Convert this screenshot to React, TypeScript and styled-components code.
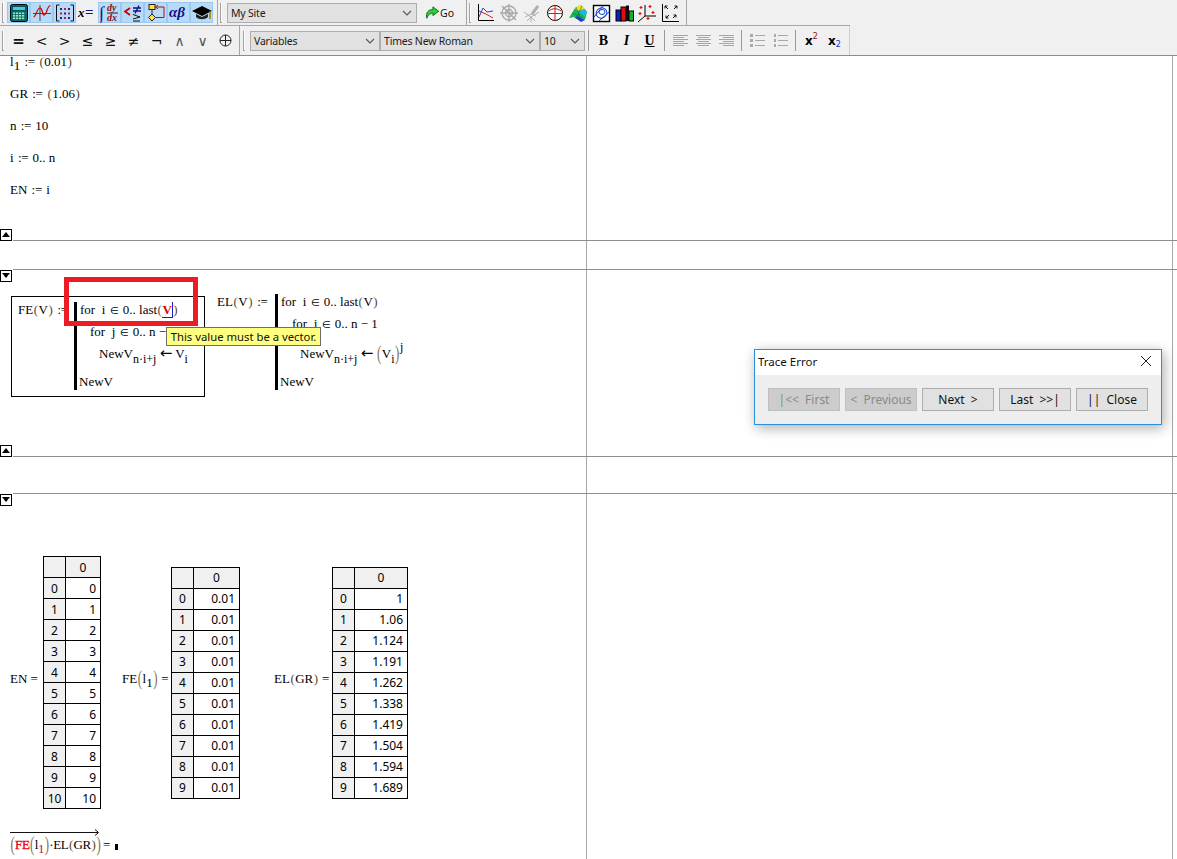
import React from "react";
import styled, { createGlobalStyle } from "styled-components";

const Global = createGlobalStyle`
  html, body { margin: 0; padding: 0; background: #fff; overflow: hidden; }
  * { box-sizing: border-box; }
`;

const uiFont = `"Noto Sans", "DejaVu Sans", sans-serif`;
const mathFont = `"Liberation Serif", serif`;

const Page = styled.div`
  position: relative; width: 1177px; height: 859px; overflow: hidden;
  display: flex; flex-direction: column; background: #fff;
`;
const Chrome = styled.header`
  position: relative; z-index: 2; flex: none; height: 56px; background: #f0f0f0;
  border-bottom: 1px solid #8c8c8c; display: flex; flex-direction: column;
`;
const TopRow = styled.div`display: flex; height: 26px; width: 850px; border-bottom: 1px solid #a6a6a6;`;
const SecondRow = styled.div`display: flex; align-items: center; height: 29px; width: 850px; border-right: 1px solid #d0d0d0;`;
const Bar = styled.div<{ $w: number }>`
  display: flex; align-items: center; width: ${p => p.$w}px; flex: none; height: 100%;
  border-right: 1px solid #a6a6a6;
`;
const Grip = styled.i<{ $ml?: number; $mr?: number }>`
  display: block; width: 2px; height: 20px; flex: none;
  margin: 0 ${p => p.$mr ?? 3}px 0 ${p => p.$ml ?? 2}px;
  border-left: 1px solid #a0a0a0; border-bottom: 1px solid #a0a0a0; background: #fff;
`;
const IconBtn = styled.span<{ $on?: boolean; $w?: number }>`
  display: flex; align-items: center; justify-content: center; flex: none;
  width: ${p => p.$w ?? 23}px; height: 21px;
  background: ${p => (p.$on ? "#b9daf6" : "transparent")};
  border: 1px solid ${p => (p.$on ? "#98c9f3" : "transparent")};
`;
const OpBtn = styled.span<{ $bold?: boolean; $size?: number; $soft?: boolean }>`
  display: flex; align-items: center; justify-content: center; flex: none;
  width: 23px; height: 22px; color: ${p => (p.$soft ? "#555" : "#111")};
  font: ${p => (p.$bold ? 700 : 400)} ${p => p.$size ?? 14}px "DejaVu Sans", sans-serif;
`;
const Select = styled.div<{ $w: number; $ml?: number }>`
  display: flex; align-items: center; justify-content: space-between; flex: none;
  width: ${p => p.$w}px; height: 20px; margin-left: ${p => p.$ml ?? 0}px; padding: 0 4px 0 3px;
  background: #e1e1e1; border: 1px solid #adadad; color: #1a1a1a;
  font: 10.5px ${uiFont}; letter-spacing: -0.2px;
`;
const GoBtn = styled.div`
  display: flex; align-items: center; gap: 0; margin-left: 8px; color: #111;
  font: 10.5px ${uiFont};
`;
const Sep = styled.i<{ $after?: number }>`
  display: block; width: 1px; height: 21px; flex: none; background: #9a9a9a;
  margin: 0 ${p => p.$after ?? 4}px 0 3px;
`;
const FmtBtn = styled.span<{ $italic?: boolean; $under?: boolean }>`
  display: flex; align-items: center; justify-content: center; flex: none; width: 23px; height: 22px;
  color: #000; font: ${p => (p.$italic ? "italic" : "normal")} 700 14px ${mathFont};
  text-decoration: ${p => (p.$under ? "underline" : "none")};
`;
const ScriptBtn = styled.span`
  display: flex; align-items: center; justify-content: center; flex: none; width: 23px; height: 22px;
  font: 700 12px "DejaVu Sans", sans-serif; color: #000;
`;
const Script = styled.span<{ $c: string; $top: number }>`
  position: relative; top: ${p => p.$top}px; font-size: 8px; font-weight: 400; color: ${p => p.$c};
`;

const Worksheet = styled.main`
  flex: 1; overflow: hidden; display: flex; flex-direction: column; color: #000;
  font: 13px/16px ${mathFont};
  background:
    linear-gradient(#a8a8a8, #a8a8a8) 586px 0 / 1px 100% no-repeat,
    linear-gradient(#a8a8a8, #a8a8a8) 1172px 0 / 1px 100% no-repeat,
    #fff;
`;
const Defs = styled.section`
  flex: none; height: 172px; display: flex; flex-direction: column; gap: 16px;
  margin-top: -2px; padding-left: 10px;
`;
const DefsFrame = styled.div`flex: none; height: 172px;`;
const Line = styled.div`height: 16px; white-space: pre;`;
const Sub = styled.span<{ $color?: string }>`
  position: relative; top: 4px; font-size: 13px; color: ${p => p.$color ?? "inherit"};
`;
const SmallSub = styled.span`position: relative; top: 5px; font-size: 12px;`;
const Assign = styled.span`margin: 0 1px; letter-spacing: -0.3px;`;
const Paren = styled.span`color: #5c4a32; margin: 0 0.5px;`;
const Elem = styled.span`font-size: 10px; margin: 0 1px;`;
const Arrow = styled.span`font: 15px/16px "DejaVu Sans", sans-serif;`;
const Rule = styled.div<{ $dir: "up" | "down"; $mt?: number }>`
  flex: none; display: flex; height: 13px; margin-top: ${p => p.$mt ?? 0}px;
  align-items: ${p => (p.$dir === "up" ? "flex-end" : "flex-start")};
  &::after { content: ""; flex: 1; height: 1px; background: #8e8e8e; }
`;
const Marker = styled.span`
  flex: none; display: flex; align-items: center; justify-content: center;
  width: 12px; height: 12px; margin-right: 1px; align-self: center; background: #fff; border: 1px solid #000;
`;
const Programs = styled.section`
  flex: none; height: 162px; padding: 14px 0 0 11px; display: flex; align-items: flex-start;
`;
const FnBox = styled.div`
  width: 194px; height: 101px; border: 1px solid #000; padding: 5px 0 0 6px; display: flex;
`;
const FnPlain = styled.div`margin: -2px 0 0 12px; display: flex;`;
const FnLabel = styled.div<{ $w: number }>`width: ${p => p.$w}px; white-space: pre; flex: none;`;
const Program = styled.div<{ $h: number }>`
  width: 130px; height: ${p => p.$h}px; border-left: 3px solid #000; flex: none; display: flex; flex-direction: column;
`;
const ProgRow = styled.div<{ $indent: number; $gap?: number }>`
  height: 16px; flex: none; white-space: pre;
  margin-top: ${p => p.$gap ?? 0}px; padding-left: ${p => p.$indent}px;
`;
const ErrV = styled.span`
  color: #e00000; font-weight: 700; border-bottom: 1px solid #1a1ad0; border-right: 1px solid #1a1ad0;
`;
const TallParen = styled.span`
  display: inline-block; color: #8a7350; margin: 0 0.5px; transform: scale(1, 1.55);
`;
const Sups = styled.span`position: relative; top: -7px; font-size: 12px;`;
const Results = styled.section`
  flex: none; display: flex; align-items: center; padding: 50px 0 0 10px;
`;
const Group = styled.div<{ $ml?: number }>`display: flex; align-items: center; margin-left: ${p => p.$ml ?? 0}px;`;
const EqLabel = styled.div<{ $w: number }>`
  width: ${p => p.$w}px; flex: none; white-space: pre; margin-bottom: 8px;
`;
const Table = styled.table<{ $w: number }>`
  border-collapse: collapse; table-layout: fixed; width: ${p => p.$w}px; flex: none;
  font: 12px "Noto Sans", sans-serif; color: #000;
`;
const Head = styled.th<{ $w: number }>`
  width: ${p => p.$w}px; height: 21px; padding: 0; font-weight: 400; text-align: center;
  background: #f0f0f0; border: 1px solid #000;
`;
const Val = styled.td`height: 21px; padding: 0 4px 0 0; text-align: right; border: 1px solid #000;`;
const VecWrap = styled.div`
  flex: none; margin: 20px 0 0 10px; display: flex; align-items: flex-end;
`;
const VecBody = styled.div`display: flex; flex-direction: column; width: 90px;`;
const VecLine = styled.div`height: 16px; white-space: pre; margin-top: 1px; letter-spacing: -0.3px;`;
const RedText = styled.span`color: #e8001c; -webkit-text-stroke: 0.3px #e8001c;`;
const Caret = styled.i`
  display: block; width: 3px; height: 6px; background: #000; margin: 0 0 3px 5px;
`;
const Eq = styled.span`margin: 0 0 0 3px; height: 16px;`;

const RedBox = styled.div`
  position: absolute; left: 64px; top: 277px; width: 134px; height: 49px; border: 5px solid #ed1c24; z-index: 3;
`;
const Tooltip = styled.div`
  position: absolute; left: 166px; top: 327px; width: 155px; height: 19px; z-index: 3;
  display: flex; align-items: center; justify-content: center; white-space: nowrap;
  background: #ffff80; border: 1px solid #6e6e6e; color: #111; font: 11.3px ${uiFont};
`;
const Dialog = styled.aside`
  position: absolute; left: 754px; top: 349px; width: 408px; height: 76px; z-index: 4;
  border: 1px solid #2b90d9; background: #eee; box-shadow: 2px 3px 12px rgba(0,0,0,.33);
  display: flex; flex-direction: column;
`;
const TitleBar = styled.div`
  flex: none; height: 25px; background: #fff; display: flex; align-items: center; justify-content: space-between;
  padding: 0 9px 3px 3px; color: #111; font: 11.5px ${uiFont};
`;
const DlgButtons = styled.div`display: flex; gap: 5px; padding: 13px 0 0 13px;`;
const DlgBtn = styled.div<{ $off?: boolean }>`
  width: 72px; height: 23px; display: flex; align-items: center; justify-content: center; white-space: pre;
  font: 12px ${uiFont};
  color: ${p => (p.$off ? "#8a8a8a" : "#111")};
  background: ${p => (p.$off ? "#cccccc" : "#e1e1e1")};
  border: 1px solid ${p => (p.$off ? "#bfbfbf" : "#adadad")};
`;

const S = (p: { children: React.ReactNode }) => (
  <svg width="20" height="20" viewBox="0 0 20 20" style={{ display: "block" }}>{p.children}</svg>
);
const Calc = () => (<S>
  <rect x="1.5" y="1.5" width="17" height="17" rx="2" fill="#0b6a6a" stroke="#000" />
  <rect x="3.5" y="3.5" width="13" height="4" fill="#3fd0e0" stroke="#034" strokeWidth=".7" />
  {[9.5, 12, 14.5].map(y => [4, 7, 10, 13].map(x => <rect key={x + "-" + y} x={x} y={y} width="2.2" height="1.6" fill="#9fe8b8" />))}
</S>);
const Plot = () => (<S>
  <path d="M1 10.5H19M8 2V18" stroke="#222" strokeWidth=".8" />
  <path d="M1.5 14C4 14 5 5 8 5S10 13 12.5 12 15 3 18.5 2.5" fill="none" stroke="#d40000" strokeWidth="1.2" />
</S>);
const MatrixIc = () => (<S>
  <path d="M4.5 2H1.5V18H4.5M15.5 2H18.5V18H15.5" fill="none" stroke="#111" />
  {[5, 9.5, 14].map((y, i) => [5, 9, 13].map((x, j) => <rect key={x + "-" + y} x={x} y={y} width="2" height="2" fill={(i + j) % 2 ? "#c02040" : "#22228c"} />))}
</S>);
const Txt = styled.text<{ $s: number; $b?: boolean; $i?: boolean; $c?: string }>`
  font-family: ${mathFont}; font-size: ${p => p.$s}px; font-weight: ${p => (p.$b ? 700 : 400)};
  font-style: ${p => (p.$i ? "italic" : "normal")}; fill: ${p => p.$c ?? "#000"};
`;
const Deriv = () => (<S>
  <Txt x="-1" y="16" $s={18} $c="#10108c">∫</Txt>
  <Txt x="7" y="8" $s={10} $i $b $c="#8c1010">dy</Txt>
  <path d="M7 10H18" stroke="#222" />
  <Txt x="7" y="18" $s={10} $i $b $c="#8c1010">dx</Txt>
</S>);
const BoolIc = () => (<S>
  <path d="M7 5L2 8.5L7 12" fill="none" stroke="#c00000" strokeWidth="1.7" />
  <path d="M10 5H18M10 8H18M16 2.500L12 10.500" fill="none" stroke="#10108c" strokeWidth="1.3" />
  <path d="M10 11.500L17 14L10 16M10 18H17" fill="none" stroke="#111" />
</S>);
const Flow = () => (<S>
  <rect x="3" y="1.5" width="6" height="5" fill="#ffe040" stroke="#223" />
  <path d="M6 6.5V11" stroke="#223" />
  <path d="M6 11L9.5 14.5L6 18L2.5 14.5Z" fill="#ffe040" stroke="#223" />
  <path d="M9 4H18V14.5H10M12 2L9.5 4L12 6" fill="none" stroke="#b01010" />
</S>);
const Cap = () => (<S>
  <path d="M0 8L10 3L20 8L10 13Z" fill="#000" />
  <path d="M4 11V14C7 17 13 17 16 14V11L10 14Z" fill="#222" />
  <path d="M18 8.5V16" stroke="#b09020" strokeWidth="2" />
</S>);
const GoIc = () => (
  <svg width="15" height="16" viewBox="0 0 17 17" style={{ display: "block" }}>
    <path d="M2 14.5C0.5 8 4 4.5 9 4.5V1.5L15.5 6.5L9 11.5V8.5C6 8.5 3.5 10.5 2 14.5Z" fill="#2fd02f" stroke="#062" strokeWidth="1" />
  </svg>
);
const XY = () => (<S>
  <path d="M2.5 1V17.5H18" fill="none" stroke="#000" />
  <path d="M3 14L7 5L11 9L17 8" fill="none" stroke="#2040e0" />
  <path d="M3 8L10 11L17 15" fill="none" stroke="#e02020" />
</S>);
const PolarGrey = () => (<S>
  <g fill="none" stroke="#a9a9a9" strokeWidth="1.3">
    <circle cx="10" cy="10" r="7" /><circle cx="10" cy="10" r="3.5" />
    <path d="M1 10H19M10 1V19M3 3L17 17" />
  </g>
</S>);
const SurfGrey = () => (<S>
  <g fill="none" stroke="#b0b0b0">
    <path d="M2 9L9 14V19M9 14L17 9M3 14L9 11L14 13M5 18L9 14L13 18" />
    <path d="M10 11L16 3" strokeWidth="3" />
  </g>
</S>);
const PolarC = () => (<S>
  <circle cx="10" cy="10" r="7.5" fill="#fff" stroke="#000" />
  <path d="M2 10.5H18" stroke="#0a8a0a" /><path d="M10 2V18" stroke="#d01010" />
  <path d="M4 8C7 5 12 5 16 8" fill="none" stroke="#d01010" />
</S>);
const Surface = () => (<S>
  <path d="M1 15L7 5L13 2L19 9L17 17L10 13Z" fill="#18b850" />
  <path d="M7 5L13 2L17 6L10 8Z" fill="#f4e020" />
  <path d="M10 8L17 6L19 9L17 13L12 10Z" fill="#20b8e0" />
  <path d="M1 15L10 13L17 17L13 19L6 14Z" fill="#1840d0" />
  <path d="M4 10L15 15M8 4L12 14M14 3L8 16" stroke="#063" strokeWidth=".5" />
</S>);
const Contour = () => (<S>
  <rect x="2.5" y="2.5" width="16" height="16" fill="#fff" stroke="#000" strokeWidth="1.4" />
  <g fill="none" stroke="#1840d0">
    <ellipse cx="11" cy="9" rx="3" ry="2.5" /><ellipse cx="10.5" cy="10" rx="5.5" ry="5" transform="rotate(-30 10.5 10)" />
    <path d="M3 14L12 3M8 18L18 9" />
  </g>
</S>);
const Bars = () => (<S>
  <rect x="2" y="7" width="5" height="11" fill="#1020c0" stroke="#000" />
  <rect x="7" y="4" width="5" height="14" fill="#d81010" stroke="#000" />
  <rect x="12" y="2.5" width="3" height="15.5" fill="#101010" />
  <rect x="15" y="8" width="4.5" height="10" fill="#18b030" stroke="#000" />
</S>);
const Scatter = () => (<S>
  <path d="M8 2V13L1 19M8 13H19" fill="none" stroke="#000" />
  <path d="M4 3V6M2.5 4.5H5.5M13 2V5M11.500 3.500H14.500M16 8V11M14.500 9.500H17.500M3 9V12M1.500 10.500H4.500M11 14V17M9.500 15.500H12.500" stroke="#e01010" strokeWidth="1.2" />
</S>);
const VecField = () => (<S>
  <path d="M2.500 1V18.500H19" fill="none" stroke="#000" />
  <path d="M5 3L8 6M5 3V5.500M5 3H7.500M17 3L14 6M17 3V5.500M17 3H14.500M6 15L9 12M6 15V12.500M6 15H8.500M16 12L13 15M16 12V14.500M16 12H13.500" fill="none" stroke="#111" />
</S>);
const Chevron = () => (
  <svg width="10" height="6" viewBox="0 0 10 6"><path d="M1 1L5 5L9 1" fill="none" stroke="#555" strokeWidth="1.1" /></svg>
);
const AlignIc = ({ kind }: { kind: "l" | "c" | "r" }) => (
  <svg width="15" height="12" viewBox="0 0 15 12" shapeRendering="crispEdges">
    {[0, 2, 4, 6, 8, 10].map((y, i) => {
      const w = i % 2 ? 11 : 15;
      const x = kind === "l" ? 0 : kind === "r" ? 15 - w : 2 * (i % 2);
      return <rect key={y} x={x} y={y} width={w} height="1" fill="#a4a4a4" />;
    })}
  </svg>
);
const ListIc = ({ num }: { num?: boolean }) => (
  <svg width="15" height="14" viewBox="0 0 15 14" shapeRendering="crispEdges">
    {[1, 6, 11].map(y => (
      <g key={y}>
        <rect x={num ? 1 : 0} y={y - 1} width={num ? 2 : 3} height={3} fill="#a8a8a8" />
        <rect x="5" y={y} width="10" height="1" fill="#a8a8a8" />
      </g>
    ))}
  </svg>
);
const CrossCircle = () => (
  <svg width="13" height="13" viewBox="0 0 13 13"><g fill="none" stroke="#222"><circle cx="6.500" cy="6.500" r="5.500" /><path d="M1 6.500H12M6.500 1V12" /></g></svg>
);
const Tri = ({ up }: { up: boolean }) => (
  <svg width="8" height="5" viewBox="0 0 8 5"><path d={up ? "M0 5L4 0L8 5Z" : "M0 0L4 5L8 0Z"} fill="#000" /></svg>
);
const VecArrow = () => (
  <svg width="90" height="7" viewBox="0 0 90 7" style={{ display: "block" }}>
    <path d="M0 3.500H88M85 0.500L88.500 3.500L85 6.500" fill="none" stroke="#111" />
  </svg>
);
const CloseX = () => (
  <svg width="12" height="12" viewBox="0 0 12 12"><path d="M1 1L11 11M11 1L1 11" stroke="#222" /></svg>
);

const ResultTable = ({ w, rows }: { w: number; rows: string[] }) => (
  <Table $w={22 + w}>
    <thead><tr><Head $w={22} /><Head $w={w}>0</Head></tr></thead>
    <tbody>
      {rows.map((v, i) => (
        <tr key={i}><Head as="td" $w={22}>{i}</Head><Val>{v}</Val></tr>
      ))}
    </tbody>
  </Table>
);

const Up = () => <Rule $dir="up"><Marker><Tri up /></Marker></Rule>;
const Down = ({ mt }: { mt: number }) => <Rule $dir="down" $mt={mt}><Marker><Tri up={false} /></Marker></Rule>;

export default function App() {
  return (
    <Page>
      <Global />
      <Chrome>
        <TopRow>
          <Bar $w={218}>
            <Grip />
            <IconBtn $on><Calc /></IconBtn>
            <IconBtn $on><Plot /></IconBtn>
            <IconBtn $on><MatrixIc /></IconBtn>
            <IconBtn $w={22}><S><Txt x="1" y="14" $s={13} $b $i>x</Txt><Txt x="8" y="14" $s={15} $b $c="#10108c">=</Txt></S></IconBtn>
            <IconBtn $on><Deriv /></IconBtn>
            <IconBtn $on><BoolIc /></IconBtn>
            <IconBtn $on><Flow /></IconBtn>
            <IconBtn $on><S><Txt x="0" y="14" $s={15} $b $i $c="#10108c">αβ</Txt></S></IconBtn>
            <IconBtn $on><Cap /></IconBtn>
          </Bar>
          <Bar $w={249}>
            <Grip />
            <Select $w={190} $ml={2}>My Site<Chevron /></Select>
            <GoBtn><GoIc />Go</GoBtn>
          </Bar>
          <Bar $w={220}>
            <Grip />
            <IconBtn><XY /></IconBtn>
            <IconBtn><PolarGrey /></IconBtn>
            <IconBtn><SurfGrey /></IconBtn>
            <IconBtn><PolarC /></IconBtn>
            <IconBtn><Surface /></IconBtn>
            <IconBtn><Contour /></IconBtn>
            <IconBtn><Bars /></IconBtn>
            <IconBtn><Scatter /></IconBtn>
            <IconBtn><VecField /></IconBtn>
          </Bar>
        </TopRow>
        <SecondRow>
          <Bar $w={240}>
            <Grip />
            <OpBtn $bold $size={15}>=</OpBtn>
            <OpBtn>&lt;</OpBtn>
            <OpBtn>&gt;</OpBtn>
            <OpBtn>≤</OpBtn>
            <OpBtn>≥</OpBtn>
            <OpBtn>≠</OpBtn>
            <OpBtn>¬</OpBtn>
            <OpBtn $size={14} $soft>∧</OpBtn>
            <OpBtn $size={14} $soft>∨</OpBtn>
            <OpBtn><CrossCircle /></OpBtn>
          </Bar>
          <Grip $ml={3} $mr={5} />
          <Select $w={130}>Variables<Chevron /></Select>
          <Select $w={160}>Times New Roman<Chevron /></Select>
          <Select $w={45}>10<Chevron /></Select>
          <Sep $after={3} />
          <FmtBtn>B</FmtBtn>
          <FmtBtn $italic>I</FmtBtn>
          <FmtBtn $under>U</FmtBtn>
          <Sep />
          <IconBtn><AlignIc kind="l" /></IconBtn>
          <IconBtn><AlignIc kind="c" /></IconBtn>
          <IconBtn><AlignIc kind="r" /></IconBtn>
          <Sep />
          <IconBtn><ListIc /></IconBtn>
          <IconBtn><ListIc num /></IconBtn>
          <Sep />
          <ScriptBtn>x<Script $c="#a01010" $top={-4}>2</Script></ScriptBtn>
          <ScriptBtn>x<Script $c="#1030d0" $top={4}>2</Script></ScriptBtn>
        </SecondRow>
      </Chrome>
      <Worksheet>
        <DefsFrame>
          <Defs>
            <Line>l<Sub>1</Sub> <Assign>:=</Assign> <Paren>(</Paren>0.01<Paren>)</Paren></Line>
            <Line>GR <Assign>:=</Assign> <Paren>(</Paren>1.06<Paren>)</Paren></Line>
            <Line>n <Assign>:=</Assign> 10</Line>
            <Line>i <Assign>:=</Assign> 0.. n</Line>
            <Line>EN <Assign>:=</Assign> i</Line>
          </Defs>
        </DefsFrame>
        <Up />
        <Down mt={28} />
        <Programs>
          <FnBox>
            <FnLabel $w={56}>FE<Paren>(</Paren>V<Paren>)</Paren> <Assign>:=</Assign></FnLabel>
            <Program $h={88}>
              <ProgRow $indent={3}>for  i <Elem>∈</Elem> 0.. last<Paren>(</Paren><ErrV>V</ErrV><Paren>)</Paren></ProgRow>
              <ProgRow $indent={13} $gap={6}>for  j <Elem>∈</Elem> 0.. n − 1</ProgRow>
              <ProgRow $indent={22} $gap={5}>NewV<SmallSub>n·i+j</SmallSub> <Arrow>←</Arrow> V<SmallSub>i</SmallSub></ProgRow>
              <ProgRow $indent={2} $gap={13}>NewV</ProgRow>
            </Program>
          </FnBox>
          <FnPlain>
            <FnLabel $w={58}>EL<Paren>(</Paren>V<Paren>)</Paren> <Assign>:=</Assign></FnLabel>
            <Program $h={96}>
              <ProgRow $indent={3}>for  i <Elem>∈</Elem> 0.. last<Paren>(</Paren>V<Paren>)</Paren></ProgRow>
              <ProgRow $indent={14} $gap={6}>for  j <Elem>∈</Elem> 0.. n − 1</ProgRow>
              <ProgRow $indent={22} $gap={13}>NewV<SmallSub>n·i+j</SmallSub> <Arrow>←</Arrow> <TallParen>(</TallParen>V<SmallSub>i</SmallSub><TallParen>)</TallParen><Sups>j</Sups></ProgRow>
              <ProgRow $indent={2} $gap={13}>NewV</ProgRow>
            </Program>
          </FnPlain>
        </Programs>
        <Up />
        <Down mt={36} />
        <Results>
          <Group>
            <EqLabel $w={33}>EN =</EqLabel>
            <ResultTable w={35} rows={["0", "1", "2", "3", "4", "5", "6", "7", "8", "9", "10"]} />
          </Group>
          <Group $ml={21}>
            <EqLabel $w={49}>FE<TallParen>(</TallParen>l<Sub>1</Sub><TallParen>)</TallParen> =</EqLabel>
            <ResultTable w={46} rows={Array(10).fill("0.01")} />
          </Group>
          <Group $ml={34}>
            <EqLabel $w={58}>EL<Paren>(</Paren>GR<Paren>)</Paren> =</EqLabel>
            <ResultTable w={53} rows={["1", "1.06", "1.124", "1.191", "1.262", "1.338", "1.419", "1.504", "1.594", "1.689"]} />
          </Group>
        </Results>
        <VecWrap>
          <VecBody>
            <VecArrow />
            <VecLine><TallParen>(</TallParen><RedText>FE</RedText><TallParen>(</TallParen>l<Sub $color="#e8001c">1</Sub><TallParen>)</TallParen>·EL<Paren>(</Paren>GR<Paren>)</Paren><TallParen>)</TallParen></VecLine>
          </VecBody>
          <Eq>=</Eq>
          <Caret />
        </VecWrap>
      </Worksheet>
      <RedBox />
      <Tooltip>This value must be a vector.</Tooltip>
      <Dialog>
        <TitleBar>Trace Error<CloseX /></TitleBar>
        <DlgButtons>
          <DlgBtn $off>{"|<<  First"}</DlgBtn>
          <DlgBtn $off>{"<  Previous"}</DlgBtn>
          <DlgBtn>{"Next  >"}</DlgBtn>
          <DlgBtn>{"Last  >>|"}</DlgBtn>
          <DlgBtn>{"||  Close"}</DlgBtn>
        </DlgButtons>
      </Dialog>
    </Page>
  );
}
